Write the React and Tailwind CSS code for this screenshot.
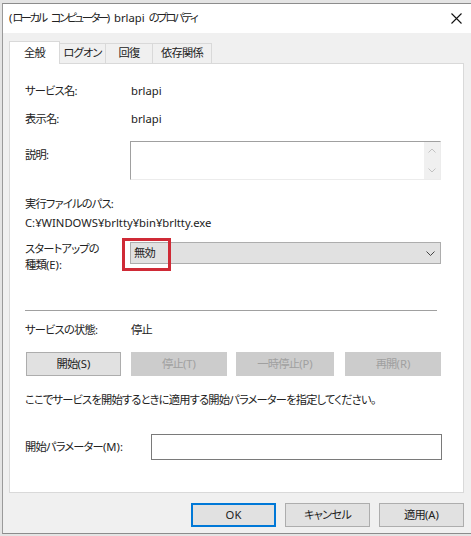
import React from "react";

const font = "font-['Noto_Sans','Noto_Sans_CJK_JP',sans-serif] [font-feature-settings:'palt']";

// Japanese runs are set a bit tighter than the Latin ones
const J = ({ children, className = "tracking-[-0.8px]" }) => <span className={className}>{children}</span>;

const Tab = ({ label, active, className = "" }) =>
  active ? (
    <div className={`h-[23px] -mb-px z-10 relative bg-white border border-b-0 border-[#d9d9d9] flex items-center justify-center ${className}`}>
      <J>{label}</J>
    </div>
  ) : (
    <div className={`h-[20px] bg-[#f0f0f0] border border-b-0 border-l-0 border-[#d9d9d9] flex items-center justify-center ${className}`}>
      <J>{label}</J>
    </div>
  );

const Btn = ({ children, disabled, primary, className = "" }) => (
  <div
    className={`h-[24px] flex items-center justify-center ${
      disabled
        ? "bg-[#cccccc] text-[#a0a0a0] border border-[#cccccc]"
        : primary
        ? "bg-[#e1e1e1] border-2 border-[#0078d7]"
        : "bg-[#e1e1e1] border border-[#adadad]"
    } ${className}`}
  >
    {children}
  </div>
);

export default function App() {
  return (
    <div className={`w-[471px] h-[536px] bg-[#e4e4e4] pt-[3px] pl-[2px] overflow-hidden text-[11.25px] text-[#222] ${font}`}>
      <div className="h-[531px] flex flex-col border-t border-b border-[#8c8c8c] border-l border-l-dashed border-l-[#9a9a9a] bg-[#f0f0f0]">
        {/* title bar */}
        <div className="h-[29px] bg-white flex items-center justify-between pl-[6px] pr-[9px] shrink-0">
          <span className="flex items-center">
            <span>(<J className="tracking-[-2.4px]">ローカル</J></span>
            <span className="ml-[5px]"><J className="tracking-[-2.4px]">コンピューター</J>)</span>
            <span className="ml-[4px]">brlapi</span>
            <J className="ml-[4px] tracking-[-2.2px]">のプロパティ</J>
          </span>
          <svg width="11" height="11" viewBox="0 0 11 11">
            <path d="M0.5 0.5 L10.5 10.5 M10.5 0.5 L0.5 10.5" stroke="#111" strokeWidth="1.1" />
          </svg>
        </div>

        {/* tabs */}
        <div className="flex items-end mt-[8px] ml-[6px]">
          <Tab label="全般" active className="w-[51px]" />
          <Tab label="ログオン" className="w-[46px]" />
          <Tab label="回復" className="w-[47px]" />
          <Tab label="依存関係" className="w-[59px]" />
        </div>

        {/* general tab panel */}
        <div className="ml-[6px] mr-[7px] h-[430px] bg-white border border-[#d9d9d9] pl-[15px] flex flex-col">
          <div className="flex h-[16px] items-center mt-[19px]">
            <span className="w-[106px]"><J>サービス名</J>:</span>
            <span>brlapi</span>
          </div>
          <div className="flex h-[16px] items-center mt-[12px]">
            <span className="w-[106px]"><J>表示名</J>:</span>
            <span>brlapi</span>
          </div>
          <div className="flex items-start mt-[14px]">
            <span className="w-[105px] h-[16px] mt-[6px] flex items-center"><J>説明</J>:</span>
            <div className="w-[311px] h-[39px] border-t border-l border-[#a0a0a0] border-r border-b border-r-[#ececec] border-b-[#ececec] flex justify-end">
              <div className="w-[16px] h-full bg-[#f0f0f0] flex flex-col items-center justify-between py-[6px]">
                <svg width="8" height="5" viewBox="0 0 8 5">
                  <path d="M0.5 4.5 L4 1 L7.5 4.5" fill="none" stroke="#c2c2c2" />
                </svg>
                <svg width="8" height="5" viewBox="0 0 8 5">
                  <path d="M0.5 0.5 L4 4 L7.5 0.5" fill="none" stroke="#c2c2c2" />
                </svg>
              </div>
            </div>
          </div>
          <div className="h-[16px] flex items-center mt-[16px]"><J>実行ファイルのパス</J>:</div>
          <div className="h-[16px] flex items-center mt-[3px]">C:¥WINDOWS¥brltty¥bin¥brltty.exe</div>

          <div className="flex items-start mt-[10px]">
            <div className="w-[105px] leading-[16px]">
              <J>スタートアップの</J>
              <br />
              <J>種類</J>(E):
            </div>
            <div className="relative mt-[1px] w-[311px] h-[22px] bg-[#e1e1e1] border border-[#adadad] flex items-center justify-between pl-[3px] pr-[5px]">
              <J>無効</J>
              <svg width="9" height="5" viewBox="0 0 9 5">
                <path d="M0.5 0.5 L4.5 4.5 L8.5 0.5" fill="none" stroke="#444" />
              </svg>
              <div className="absolute left-[-9px] top-[-5px] w-[49px] h-[33px] border-[3px] border-[#cf2a36]" />
            </div>
          </div>

          <div className="mt-[37px] w-[412px] h-px bg-[#a0a0a0]" />

          <div className="flex h-[16px] items-center mt-[11px]">
            <span className="w-[106px]"><J>サービスの状態</J>:</span>
            <J>停止</J>
          </div>

          <div className="flex mt-[14px] ml-px">
            <Btn className="w-[95px]"><J>開始</J>(S)</Btn>
            <Btn disabled className="w-[96px] ml-[10px]"><J>停止</J>(T)</Btn>
            <Btn disabled className="w-[98px] ml-[9px]"><J>一時停止</J>(P)</Btn>
            <Btn disabled className="w-[96px] ml-[11px]"><J>再開</J>(R)</Btn>
          </div>

          <div className="h-[16px] flex items-center mt-[16px]">
            <J>ここでサービスを開始するときに適用する開始パラメーターを指定してください。</J>
          </div>

          <div className="flex items-center mt-[26px]">
            <span className="w-[126px]"><J>開始パラメーター</J>(M):</span>
            <div className="w-[291px] h-[26px] border border-[#7a7a7a] bg-white" />
          </div>
        </div>

        {/* dialog buttons */}
        <div className="flex justify-end gap-[9px] mt-[10px] pr-[7px]">
          <Btn primary className="w-[85px]">OK</Btn>
          <Btn className="w-[85px]"><J>キャンセル</J></Btn>
          <Btn className="w-[85px]"><J>適用</J>(A)</Btn>
        </div>
      </div>
    </div>
  );
}
